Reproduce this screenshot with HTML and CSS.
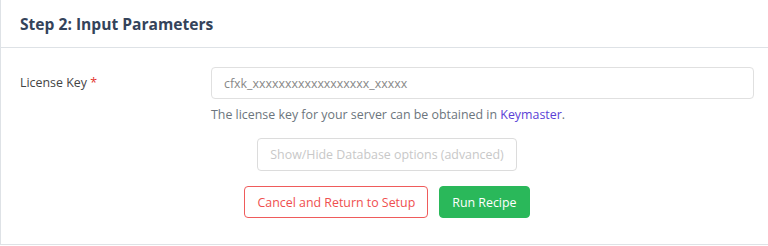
FILE: index.html
```html
<!DOCTYPE html>
<html lang="en">
<head>
<meta charset="UTF-8">
<meta name="viewport" content="width=device-width, initial-scale=1.0">
<title>Step 2: Input Parameters</title>
<link rel="stylesheet" href="styles.css">
</head>
<body>
    <div class="card">
        <div class="card-header">
            <h2>Step 2: Input Parameters</h2>
        </div>
        <div class="card-body">
            <div class="form-row">
                <label for="licenseKey">License Key <span class="required">*</span></label>
                <div class="field">
                    <input type="text" id="licenseKey" value="cfxk_xxxxxxxxxxxxxxxxxx_xxxxx">
                    <p class="help">The license key for your server can be obtained in <a href="#">Keymaster</a>.</p>
                </div>
            </div>

            <div class="button-row">
                <button class="btn btn-muted">Show/Hide Database options (advanced)</button>
            </div>
            <div class="button-row actions">
                <button class="btn btn-cancel">Cancel and Return to Setup</button>
                <button class="btn btn-run">Run Recipe</button>
            </div>
        </div>
    </div>
</body>
</html>
```

FILE: styles.css
```css
html {
    overflow: hidden;
}
body {
    font-family: 'Open Sans', sans-serif;
    font-size: 12.4px;
    margin: 0;
    padding: 0;
    background-color: #fff;
    color: #444;
}

.card {
    width: 772px;
    margin-top: -1px;
    border: 1px solid #dee2e6;
    background-color: #fff;
}

.card-header {
    height: 47px;
    padding: 0 19px;
    display: flex;
    align-items: center;
    border-bottom: 1px solid #dee2e6;
}
.card-header h2 {
    margin: 0;
    font-size: 15.6px;
    font-weight: 700;
    color: #34435a;
}

.card-body {
    padding: 19px 19px 26px 19px;
}

.form-row {
    display: grid;
    grid-template-columns: 191px 1fr;
}
.form-row label {
    line-height: 32px;
    color: #444;
}
.required {
    color: #e3342f;
}

input[type="text"] {
    box-sizing: border-box;
    width: 100%;
    height: 32px;
    margin: 0;
    padding: 0 12px;
    border: 1px solid #e0e0e0;
    border-radius: 4px;
    font-family: 'Open Sans', sans-serif;
    font-size: 12.4px;
    color: #888;
}

.help {
    margin: 7px 0 0 0;
    color: #6c757d;
}
.help a {
    color: #5b3fd6;
    text-decoration: none;
}

.button-row {
    display: flex;
    justify-content: center;
    gap: 11px;
    margin-top: 15px;
}
.actions {
    margin-top: 15px;
}

.btn {
    box-sizing: border-box;
    height: 32px;
    padding: 0 12px;
    border-radius: 4px;
    font-family: 'Open Sans', sans-serif;
    font-size: 12.4px;
    background-color: #fff;
    cursor: pointer;
}
.btn-muted {
    height: 33px;
    border: 1px solid #dcdcdc;
    color: #c8c8c8;
}
.btn-cancel {
    border: 1px solid #ef5b5b;
    color: #ef4f4f;
}
.btn-run {
    border: 1px solid #2ab85a;
    background-color: #2ab85a;
    color: #fff;
}
```
